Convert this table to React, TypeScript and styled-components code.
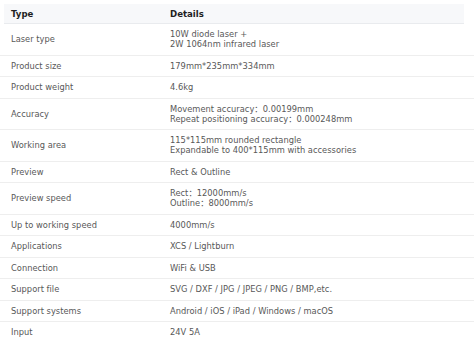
import React from "react";
import styled, { createGlobalStyle } from "styled-components";

type Spec = {
  type: string;
  details: string[];
};

const SPECS: Spec[] = [
  { type: "Laser type", details: ["10W diode laser +", "2W 1064nm infrared laser"] },
  { type: "Product size", details: ["179mm*235mm*334mm"] },
  { type: "Product weight", details: ["4.6kg"] },
  {
    type: "Accuracy",
    details: ["Movement accuracy：0.00199mm", "Repeat positioning accuracy：0.000248mm"],
  },
  {
    type: "Working area",
    details: ["115*115mm rounded rectangle", "Expandable to 400*115mm with accessories"],
  },
  { type: "Preview", details: ["Rect & Outline"] },
  { type: "Preview speed", details: ["Rect：12000mm/s", "Outline：8000mm/s"] },
  { type: "Up to working speed", details: ["4000mm/s"] },
  { type: "Applications", details: ["XCS / Lightburn"] },
  { type: "Connection", details: ["WiFi & USB"] },
  { type: "Support file", details: ["SVG / DXF / JPG / JPEG / PNG / BMP,etc."] },
  { type: "Support systems", details: ["Android / iOS / iPad / Windows / macOS"] },
  { type: "Input", details: ["24V 5A"] },
];

export default function App() {
  return (
    <>
      <GlobalStyle />
      <Table>
        <HeaderRow>
          <HeadCell>Type</HeadCell>
          <HeadCell>Details</HeadCell>
        </HeaderRow>
        {SPECS.map((spec) => (
          <Row key={spec.type}>
            <Cell>{spec.type}</Cell>
            <Cell>
              {spec.details.map((line) => (
                <Line key={line}>{line}</Line>
              ))}
            </Cell>
          </Row>
        ))}
      </Table>
    </>
  );
}

const GlobalStyle = createGlobalStyle`
  html, body {
    margin: 0;
    background: #ffffff;
  }
  body {
    font-family: "DejaVu Sans", "Noto Sans CJK SC", sans-serif;
  }
`;

const Table = styled.div`
  display: flex;
  flex-direction: column;
  padding-top: 4px;
  width: 474px;
`;

const HeaderRow = styled.div`
  display: grid;
  grid-template-columns: 159px 1fr;
  align-items: center;
  height: 20px;
  margin: 0 10px 0 4px;
  background: #f7f8fa;
  border-bottom: 1px solid #e9ebee;
  box-sizing: border-box;
`;

const HeadCell = styled.div`
  padding-left: 7px;
  font-size: 8.6px;
  font-weight: 700;
  color: #1f1f1f;
`;

const Row = styled.div`
  display: grid;
  grid-template-columns: 170px 1fr;
  align-items: center;
  padding: 5.25px 0;
  border-bottom: 1px solid #eeeeee;
`;

const Cell = styled.div`
  padding-left: 11px;
  font-size: 8.3px;
  line-height: 10px;
  letter-spacing: 0.02px;
  color: #585858;

  & + & {
    padding-left: 0;
  }
`;

const Line = styled.div``;
